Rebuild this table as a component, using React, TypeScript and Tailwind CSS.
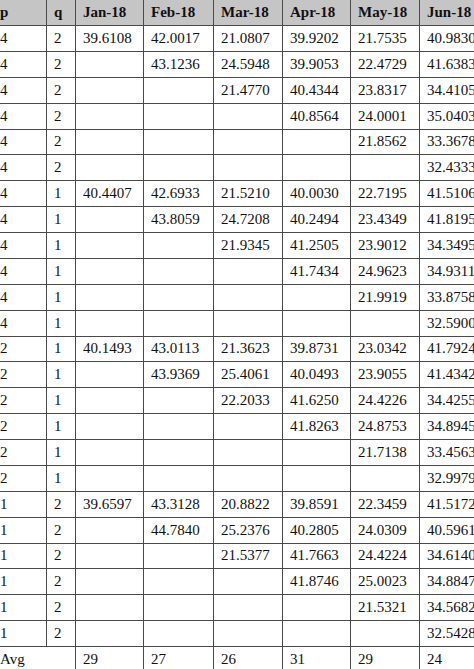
const months = ['Jan-18', 'Feb-18', 'Mar-18', 'Apr-18', 'May-18', 'Jun-18'];

const rows: [string, string, string[]][] = [
    ['4', '2', ['39.6108', '42.0017', '21.0807', '39.9202', '21.7535', '40.9830']],
    ['4', '2', ['', '43.1236', '24.5948', '39.9053', '22.4729', '41.6383']],
    ['4', '2', ['', '', '21.4770', '40.4344', '23.8317', '34.4105']],
    ['4', '2', ['', '', '', '40.8564', '24.0001', '35.0403']],
    ['4', '2', ['', '', '', '', '21.8562', '33.3678']],
    ['4', '2', ['', '', '', '', '', '32.4333']],
    ['4', '1', ['40.4407', '42.6933', '21.5210', '40.0030', '22.7195', '41.5106']],
    ['4', '1', ['', '43.8059', '24.7208', '40.2494', '23.4349', '41.8195']],
    ['4', '1', ['', '', '21.9345', '41.2505', '23.9012', '34.3495']],
    ['4', '1', ['', '', '', '41.7434', '24.9623', '34.9311']],
    ['4', '1', ['', '', '', '', '21.9919', '33.8758']],
    ['4', '1', ['', '', '', '', '', '32.5900']],
    ['2', '1', ['40.1493', '43.0113', '21.3623', '39.8731', '23.0342', '41.7924']],
    ['2', '1', ['', '43.9369', '25.4061', '40.0493', '23.9055', '41.4342']],
    ['2', '1', ['', '', '22.2033', '41.6250', '24.4226', '34.4255']],
    ['2', '1', ['', '', '', '41.8263', '24.8753', '34.8945']],
    ['2', '1', ['', '', '', '', '21.7138', '33.4563']],
    ['2', '1', ['', '', '', '', '', '32.9979']],
    ['1', '2', ['39.6597', '43.3128', '20.8822', '39.8591', '22.3459', '41.5172']],
    ['1', '2', ['', '44.7840', '25.2376', '40.2805', '24.0309', '40.5961']],
    ['1', '2', ['', '', '21.5377', '41.7663', '24.4224', '34.6140']],
    ['1', '2', ['', '', '', '41.8746', '25.0023', '34.8847']],
    ['1', '2', ['', '', '', '', '21.5321', '34.5682']],
    ['1', '2', ['', '', '', '', '', '32.5428']],
];

const averages = ['29', '27', '26', '31', '29', '24'];

const cell = 'border border-[#4a4a4a] px-[7px] text-left align-middle whitespace-nowrap';

export default function App() {
    return (
        <div
            className="w-[474px] h-[669px] overflow-hidden bg-white text-[#111]"
            style={{ fontFamily: '"Liberation Serif", "DejaVu Serif", serif' }}
        >
            <table className="-ml-[8px] -mt-px table-fixed border-collapse text-[15px] leading-none w-[497px]">
                <colgroup>
                    <col className="w-[54px]" />
                    <col className="w-[29px]" />
                    <col className="w-[68px]" />
                    <col className="w-[70px]" />
                    <col className="w-[69px]" />
                    <col className="w-[68px]" />
                    <col className="w-[69px]" />
                    <col className="w-[70px]" />
                </colgroup>
                <thead>
                    <tr className="h-[26px] bg-[#c5c5c5] font-bold">
                        <th className={cell}>p</th>
                        <th className={cell}>q</th>
                        {months.map((m) => (
                            <th key={m} className={cell}>
                                {m}
                            </th>
                        ))}
                    </tr>
                </thead>
                <tbody>
                    {rows.map(([p, q, vals], i) => (
                        <tr key={i} className="h-[25.875px]">
                            <td className={cell}>{p}</td>
                            <td className={cell}>{q}</td>
                            {vals.map((v, j) => (
                                <td key={j} className={cell}>
                                    {v}
                                </td>
                            ))}
                        </tr>
                    ))}
                    <tr className="h-[26px]">
                        <td colSpan={2} className={cell}>
                            Avg
                        </td>
                        {averages.map((a, j) => (
                            <td key={j} className={cell}>
                                {a}
                            </td>
                        ))}
                    </tr>
                </tbody>
            </table>
        </div>
    );
}
